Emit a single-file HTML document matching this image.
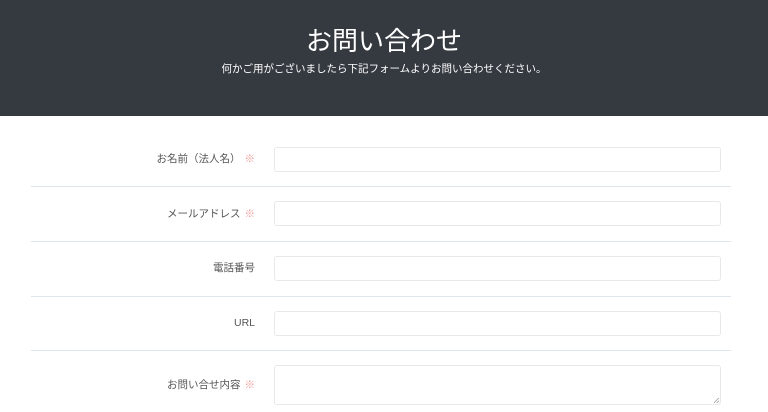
<!DOCTYPE html>
<html><head><meta charset="utf-8"><style>
body{margin:0;width:768px;height:412px;overflow:hidden;background:#fff;font-family:"Liberation Sans","Noto Sans CJK JP",sans-serif;}
.hd{position:absolute;left:0;top:0;width:768px;height:116px;background:#353a41;color:#fff;text-align:center;}
.hd h1{position:absolute;top:24px;left:0;right:0;margin:0;font-weight:400;font-size:26px;line-height:34px;}
.hd p{position:absolute;top:61px;left:0;right:0;margin:0;font-size:10.5px;line-height:16px;}
.lbl{position:absolute;right:513px;font-size:10.5px;color:#555;line-height:16px;white-space:nowrap;}
.lbl span{color:#e99;margin-left:4px}
.in{position:absolute;left:274px;width:445px;border:1px solid #e6e8ea;border-radius:3px;background:#fff;}
.sep{position:absolute;left:31px;width:700px;height:1px;background:#dde6ee;}
.rz{position:absolute;right:1px;bottom:1px;width:5px;height:5px;background:linear-gradient(135deg,transparent 45%,#999 45%,#999 55%,transparent 55%,transparent 75%,#999 75%,#999 85%,transparent 85%);}
</style></head><body>
<div class="hd"><h1>お問い合わせ</h1><p>何かご用がございましたら下記フォームよりお問い合わせください。</p></div>
<div class="lbl" style="top:151px">お名前（法人名）<span>※</span></div>
<div class="in" style="top:147px;height:23px"></div>
<div class="sep" style="top:186px"></div>
<div class="lbl" style="top:206px">メールアドレス<span>※</span></div>
<div class="in" style="top:201px;height:23px"></div>
<div class="sep" style="top:241px"></div>
<div class="lbl" style="top:260px">電話番号</div>
<div class="in" style="top:256px;height:23px"></div>
<div class="sep" style="top:296px"></div>
<div class="lbl" style="top:315px">URL</div>
<div class="in" style="top:311px;height:23px"></div>
<div class="sep" style="top:350px"></div>
<div class="lbl" style="top:377px">お問い合せ内容<span>※</span></div>
<div class="in" style="top:365px;height:38px"><div class="rz"></div></div>
</body></html>
